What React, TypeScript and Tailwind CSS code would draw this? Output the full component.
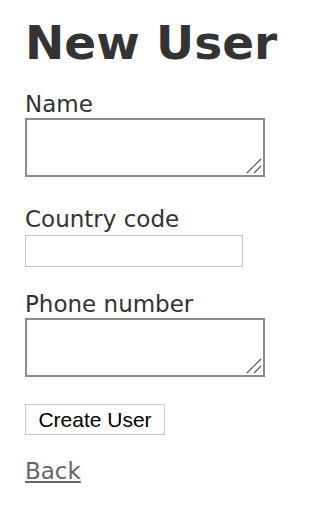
function Grip() {
  return (
    <svg
      className="pointer-events-none absolute right-[3px] bottom-[3px]"
      width="16"
      height="16"
      viewBox="0 0 16 16"
      fill="none"
      stroke="#555"
      strokeWidth="1.2"
    >
      <path d="M1 15 L15 1" />
      <path d="M8 15 L15 8" />
    </svg>
  );
}

function Area({ id }: { id: string }) {
  return (
    <div className="relative mt-[1px] w-[240px] h-[59px]">
      <textarea
        id={id}
        className="block w-full h-full resize-none border-2 border-[#8c8c8c] bg-white"
      />
      <Grip />
    </div>
  );
}

export default function App() {
  return (
    <div className="min-h-[512px] bg-white px-[25px] pt-[19px] text-[#333] font-['DejaVu_Sans',Verdana,sans-serif]">
      <h1 className="text-[47px] leading-[47px] font-bold">New User</h1>

      <form onSubmit={(e) => e.preventDefault()}>
        {/* Name */}
        <div className="mt-[25px]">
          <label htmlFor="user_name" className="block text-[23px] leading-[26px]">
            Name
          </label>
          <Area id="user_name" />
        </div>

        {/* Country code */}
        <div className="mt-[29px]">
          <label htmlFor="user_country_code" className="block text-[23px] leading-[26px]">
            Country code
          </label>
          <input
            id="user_country_code"
            type="text"
            className="mt-[3px] block w-[218px] h-[32px] border border-[#c4c4c4] bg-white"
          />
        </div>

        {/* Phone number */}
        <div className="mt-[24px]">
          <label htmlFor="user_phone_number" className="block text-[23px] leading-[26px]">
            Phone number
          </label>
          <Area id="user_phone_number" />
        </div>

        <div className="mt-[27px]">
          <button
            type="submit"
            className="block w-[140px] h-[31px] border border-[#c8c8c8] bg-white text-black text-[21px] leading-none font-['Liberation_Sans',Arial,sans-serif]"
          >
            Create User
          </button>
        </div>
      </form>

      <a href="#" className="mt-[23px] block w-fit text-[23px] leading-[26px] text-[#666] underline">
        Back
      </a>
    </div>
  );
}
